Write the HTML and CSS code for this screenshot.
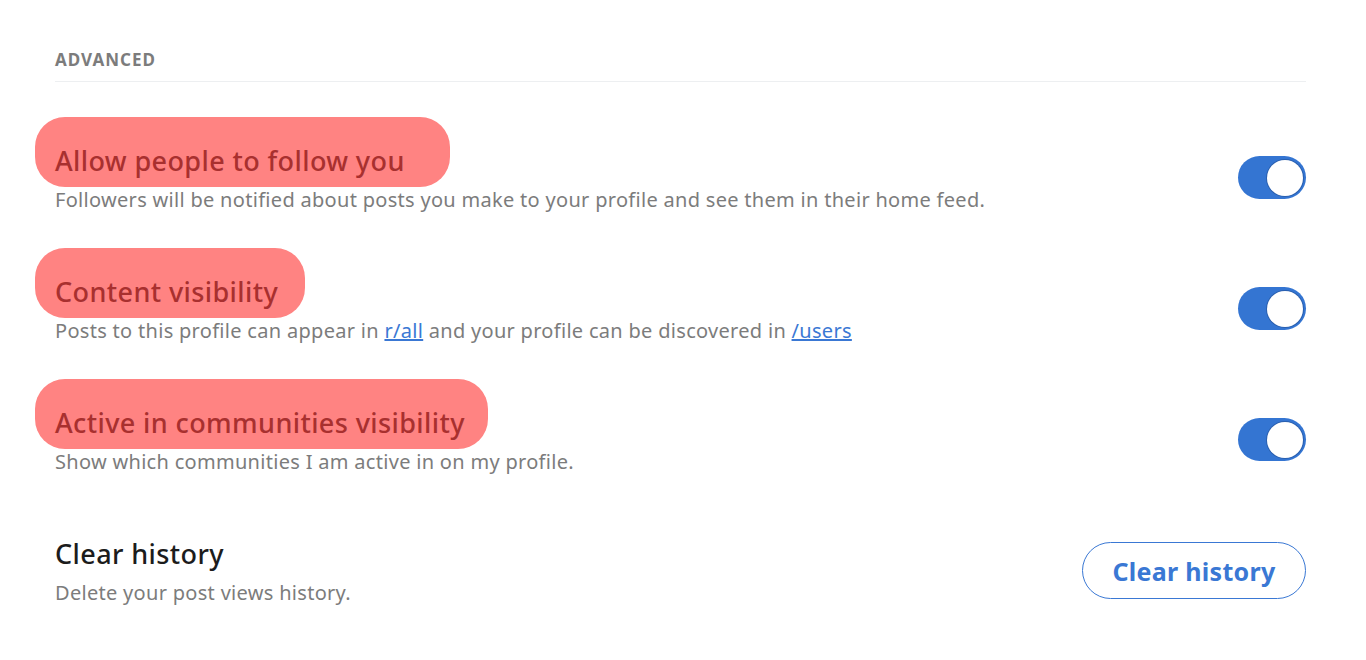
FILE: index.html
```html
<!DOCTYPE html>
<html>
<head>
<meta charset="utf-8">
<link rel="stylesheet" href="styles.css">
</head>
<body>
<div class="page">
  <div class="section-head">ADVANCED</div>
  <div class="rows">
    <div class="row">
      <div class="text">
        <div class="title"><span class="mark mark-wide">Allow people to follow you</span></div>
        <div class="desc">Followers will be notified about posts you make to your profile and see them in their home feed.</div>
      </div>
      <div class="toggle"><span class="knob"></span></div>
    </div>
    <div class="row">
      <div class="text">
        <div class="title"><span class="mark mark-mid">Content visibility</span></div>
        <div class="desc">Posts to this profile can appear in <a href="#">r/all</a> and your profile can be discovered in <a href="#">/users</a></div>
      </div>
      <div class="toggle"><span class="knob"></span></div>
    </div>
    <div class="row">
      <div class="text">
        <div class="title"><span class="mark mark-tight">Active in communities visibility</span></div>
        <div class="desc">Show which communities I am active in on my profile.</div>
      </div>
      <div class="toggle"><span class="knob"></span></div>
    </div>
    <div class="row">
      <div class="text">
        <div class="title">Clear history</div>
        <div class="desc">Delete your post views history.</div>
      </div>
      <button class="btn">Clear history</button>
    </div>
  </div>
</div>
</body>
</html>
```
FILE: styles.css
```css
html, body {
  margin: 0;
  background: #ffffff;
}
body {
  font-family: "Noto Sans", "Open Sans", sans-serif;
  color: #1c1c1c;
}
.page {
  padding: 50px 60px 0 55px;
}
.section-head {
  font-size: 17px;
  line-height: 20px;
  font-weight: 700;
  color: #7c7c7c;
  letter-spacing: 1px;
  padding-bottom: 11px;
  border-bottom: 1px solid #edeff1;
}
.rows {
  margin-top: 65px;
  display: flex;
  flex-direction: column;
  gap: 66px;
}
.row {
  display: flex;
  align-items: center;
  justify-content: space-between;
  height: 65px;
}
.title {
  font-size: 27px;
  line-height: 28px;
  font-weight: 500;
  letter-spacing: 0.4px;
}
.mark {
  position: relative;
  z-index: 0;
  color: #a8302f;
}
.mark::before {
  content: "";
  position: absolute;
  z-index: -1;
  left: -20px;
  right: -45px;
  top: -25px;
  bottom: -8px;
  background: #ff8382;
  border-radius: 30px;
}
.mark-mid::before {
  right: -27px;
}
.mark-tight::before {
  right: -23px;
}
.desc {
  margin-top: 13px;
  font-size: 20px;
  line-height: 24px;
  letter-spacing: 0.3px;
  color: #7c7c7c;
}
.desc a {
  color: #3a78d4;
  text-decoration: underline;
}
.toggle {
  width: 68px;
  height: 43px;
  margin-bottom: 4px;
  border-radius: 22px;
  background: #3475d2;
  display: flex;
  align-items: center;
  justify-content: flex-end;
  padding-right: 3px;
  box-sizing: border-box;
  flex-shrink: 0;
}
.knob {
  width: 36px;
  height: 36px;
  border-radius: 50%;
  background: #fff;
  box-shadow: 0 0 0 1px #2a5fae;
}
.btn {
  width: 224px;
  height: 57px;
  margin-bottom: 4px;
  border: 1.5px solid #3a78d4;
  border-radius: 29px;
  background: #fff;
  color: #3a78d4;
  font-family: "Noto Sans", "Open Sans", sans-serif;
  font-size: 25px;
  font-weight: 700;
  letter-spacing: 0.3px;
  flex-shrink: 0;
  padding: 0;
}
```
